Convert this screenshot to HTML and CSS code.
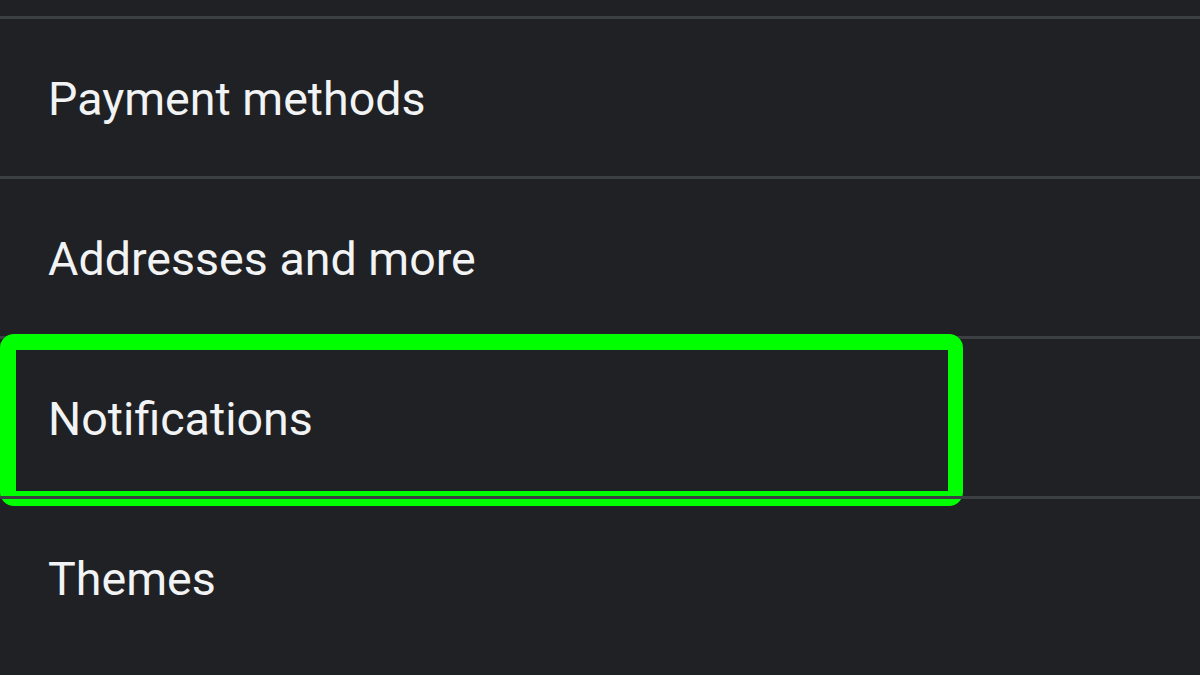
FILE: index.html
```html
<!DOCTYPE html>
<html>
<head>
<meta charset="utf-8">
<link rel="stylesheet" href="styles.css">
</head>
<body>
<div class="settings">
  <div class="top-space"></div>
  <div class="item"><span class="label">Payment methods</span></div>
  <div class="item"><span class="label">Addresses and more</span></div>
  <div class="item highlighted"><span class="label">Notifications</span><div class="highlight"></div></div>
  <div class="item"><span class="label">Themes</span></div>
</div>
</body>
</html>
```
FILE: styles.css
```css
html, body {
  margin: 0;
  padding: 0;
  background: #202124;
}
body {
  width: 1200px;
  height: 675px;
  overflow: hidden;
  font-family: Roboto, "Liberation Sans", sans-serif;
}
.settings {
  display: flex;
  flex-direction: column;
}
.top-space {
  height: 16px;
}
.item {
  position: relative;
  height: 157px;
  border-top: 3px solid #3c4043;
  display: flex;
  align-items: center;
  padding-left: 48px;
}
.label {
  color: #f1f3f4;
  font-size: 46.6px;
  line-height: 1;
  margin-top: 4px;
}
.highlight {
  position: absolute;
  left: 0;
  top: -5px;
  width: 932px;
  height: 141px;
  border-style: solid;
  border-color: #00ff00;
  border-width: 16px 15px 15px 16px;
  border-radius: 14px;
}
```
